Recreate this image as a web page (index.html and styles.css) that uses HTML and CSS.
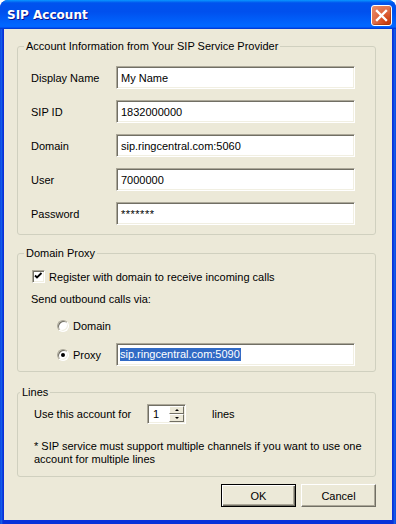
FILE: index.html
```html
<!DOCTYPE html>
<html>
<head>
<meta charset="utf-8">
<title>SIP Account</title>
<link rel="stylesheet" href="styles.css">
</head>
<body>
<div class="window">
  <div class="titlebar">
    <span class="title">SIP Account</span>
    <span class="close">
      <svg width="21" height="21" viewBox="0 0 21 21"><path d="M6 6 L15 15 M15 6 L6 15" stroke="#fff" stroke-width="2.4" stroke-linecap="square"/></svg>
    </span>
  </div>
  <div class="frame">
    <div class="client">
      <fieldset class="group g1">
        <legend>Account Information from Your SIP Service Provider</legend>
        <div class="form">
          <span class="lbl">Display Name</span><div class="edit">My Name</div>
          <span class="lbl">SIP ID</span><div class="edit">1832000000</div>
          <span class="lbl">Domain</span><div class="edit">sip.ringcentral.com:5060</div>
          <span class="lbl">User</span><div class="edit">7000000</div>
          <span class="lbl">Password</span><div class="edit pwd">*******</div>
        </div>
      </fieldset>

      <fieldset class="group g2">
        <legend>Domain Proxy</legend>
        <div class="g2-body">
          <div class="check-row">
            <span class="checkbox">
              <svg width="13" height="13" viewBox="0 0 13 13"><path d="M3 5.5 L5 7.5 L9.5 3" fill="none" stroke="#000" stroke-width="1.8"/></svg>
            </span>
            <span>Register with domain to receive incoming calls</span>
          </div>
          <div class="send">Send outbound calls via:</div>
          <div class="radio-row">
            <span class="radio"></span><span class="rlabel">Domain</span>
          </div>
          <div class="radio-row proxy">
            <span class="radio on"></span><span class="rlabel">Proxy</span>
            <div class="edit proxy-edit"><span class="sel">sip.ringcentral.com:5090</span></div>
          </div>
        </div>
      </fieldset>

      <fieldset class="group g3">
        <legend>Lines</legend>
        <div class="g3-body">
          <div class="lines-row">
            <span class="use">Use this account for</span>
            <div class="spin">
              <span class="spin-val">1</span>
              <div class="spin-btns">
                <span class="sb up"></span>
                <span class="sb down"></span>
              </div>
            </div>
            <span class="lines">lines</span>
          </div>
          <p class="note">* SIP service must support multiple channels if you want to use one account for multiple lines</p>
        </div>
      </fieldset>

      <div class="buttons">
        <span class="btn default">OK</span>
        <span class="btn">Cancel</span>
      </div>
    </div>
  </div>
</div>
</body>
</html>
```
FILE: styles.css
```css
* { box-sizing: border-box; }
html, body { margin: 0; padding: 0; }
body {
  width: 396px;
  height: 524px;
  overflow: hidden;
  background: #fff;
  font-family: "Liberation Sans", Arial, sans-serif;
  font-size: 11px;
  color: #000;
}
.window {
  width: 396px;
  height: 524px;
  display: flex;
  flex-direction: column;
  border-radius: 8px 8px 0 0;
  overflow: hidden;
  background: #0831D9;
}
.titlebar {
  height: 29px;
  flex: none;
  display: flex;
  align-items: center;
  justify-content: space-between;
  padding: 0 4px 0 7px;
  background: linear-gradient(180deg, #0997ff, #0053ee 10%, #0050ee 40%, #0066ff 86%, #0066ff 92%, #005bff 94%, #003dd7 97%, #003dd7);
}
.title {
  color: #fff;
  font-family: "DejaVu Sans", "Liberation Sans", sans-serif;
  font-weight: bold;
  font-size: 12px;
  text-shadow: 1px 1px 0 #0f1089;
  padding-top: 1px;
}
.close {
  width: 21px;
  height: 21px;
  margin-top: 1px;
  border: 1px solid #fff;
  border-radius: 3px;
  background: radial-gradient(circle at 80% 85%, #c63a0c 0%, #d9552a 30%, #e2714c 60%, #e8906e 100%);
  box-shadow: inset -1px -1px 1px rgba(130,40,0,0.5);
  display: flex;
  align-items: center;
  justify-content: center;
}
.close svg { display: block; margin: -1px; }
.frame {
  flex: 1;
  padding: 0 4px 4px 4px;
  background: linear-gradient(90deg, #0831D9 0, #166aee 1px, #0831D9 3px, #0831D9 calc(100% - 3px), #166aee calc(100% - 1px), #0831D9 100%);
}
.client {
  height: 100%;
  background: #ECE9D8;
  padding: 11px 16px 0 13px;
}
.group {
  margin: 0;
  padding: 0;
  border: 1px solid #D0D0BF;
  border-radius: 3px;
  width: 359px;
}
.group legend {
  padding: 0 2px;
  margin-left: 6px;
  line-height: 13px;
}
.g1 .form {
  display: grid;
  grid-template-columns: 85px 239px;
  grid-auto-rows: 23px;
  row-gap: 11px;
  align-items: center;
  padding: 13px 0 9px 13px;
}
.edit {
  height: 23px;
  background: #fff;
  border: 1px solid;
  border-color: #ACA899 #fff #fff #ACA899;
  box-shadow: inset 1px 1px 0 #716F64, inset -1px -1px 0 #F1EFE2;
  padding: 0 0 0 4px;
  display: flex;
  align-items: center;
  white-space: nowrap;
}
.pwd { letter-spacing: 0.5px; }
.g2 { margin-top: 12px; }
.g2-body { padding: 10px 0 5px 0; }
.check-row {
  display: flex;
  align-items: center;
  height: 13px;
  padding-left: 14px;
  gap: 4px;
}
.checkbox {
  width: 13px;
  height: 13px;
  background: #fff;
  border: 1px solid;
  border-color: #ACA899 #fff #fff #ACA899;
  box-shadow: inset 1px 1px 0 #716F64, inset -1px -1px 0 #F1EFE2;
  position: relative;
}
.checkbox svg { position: absolute; left: -1px; top: -1px; }
.send {
  margin-top: 10px;
  padding-left: 13px;
  line-height: 13px;
  height: 13px;
}
.radio-row {
  display: flex;
  align-items: center;
  height: 13px;
  margin-top: 13px;
  padding-left: 39px;
}
.radio-row.proxy {
  height: 23px;
  margin-top: 11px;
}
.radio {
  width: 12px;
  height: 12px;
  border-radius: 50%;
  background: #fff;
  border: 1px solid;
  border-color: #ACA899 #fff #fff #ACA899;
  box-shadow: inset 1px 1px 0 #716F64, inset -1px -1px 0 #F1EFE2;
  position: relative;
}
.radio.on::after {
  content: "";
  position: absolute;
  left: 3px;
  top: 3px;
  width: 4px;
  height: 4px;
  border-radius: 50%;
  background: #000;
}
.rlabel { margin-left: 4px; }
.proxy .rlabel { width: 43px; }
.proxy-edit { width: 239px; }
.sel {
  background: #316AC5;
  color: #fff;
  line-height: 13px;
  padding: 0 1px 0 0;
  margin-left: -1px;
}
.g3 { margin-top: 14px; }
.g3 legend { margin-left: 2px; }
.g3-body { padding: 5px 0 10px 16px; }
.lines-row {
  display: flex;
  align-items: center;
  height: 20px;
}
.use { width: 113px; }
.spin {
  width: 39px;
  height: 20px;
  background: #fff;
  border: 1px solid;
  border-color: #ACA899 #fff #fff #ACA899;
  box-shadow: inset 1px 1px 0 #716F64, inset -1px -1px 0 #F1EFE2;
  display: flex;
  align-items: center;
  justify-content: space-between;
  padding: 1px 1px 1px 5px;
}
.spin-btns {
  width: 15px;
  height: 16px;
  display: flex;
  flex-direction: column;
}
.sb {
  flex: 1;
  background: #ECE9D8;
  border: 1px solid;
  border-color: #fff #716F64 #716F64 #fff;
  position: relative;
}
.sb::after {
  content: "";
  position: absolute;
  left: 5px;
  width: 0;
  height: 0;
  border-left: 2px solid transparent;
  border-right: 2px solid transparent;
}
.sb.up::after { top: 2px; border-bottom: 2px solid #000; }
.sb.down::after { top: 2px; border-top: 2px solid #000; }
.lines { margin-left: 26px; }
.note {
  margin: 16px 0 0 0;
  line-height: 13px;
  width: 330px;
}
.buttons {
  display: flex;
  justify-content: flex-end;
  gap: 5px;
  margin-top: 7px;
}
.btn {
  width: 75px;
  height: 23px;
  display: flex;
  align-items: center;
  justify-content: center;
  background: #ECE9D8;
  border: 1px solid;
  border-color: #fff #716F64 #716F64 #fff;
  box-shadow: inset -1px -1px 0 #ACA899;
}
.btn.default {
  border: 1px solid #000;
  box-shadow: inset 1px 1px 0 #fff, inset -1px -1px 0 #716F64, inset -2px -2px 0 #ACA899;
}
```
